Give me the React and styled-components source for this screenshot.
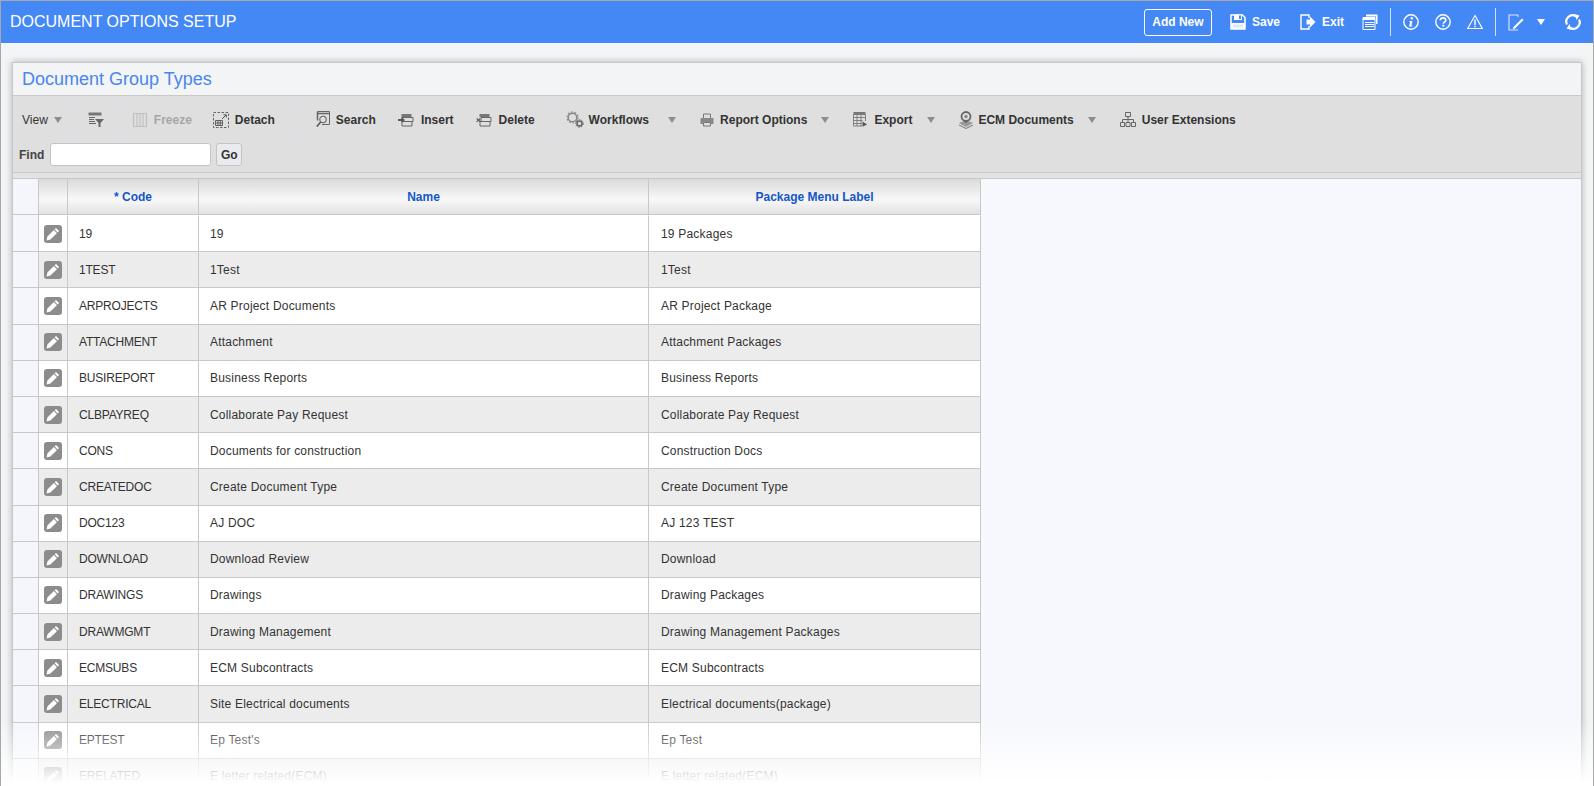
import React from "react";
import styled, { createGlobalStyle } from "styled-components";

const GlobalStyle = createGlobalStyle`
	html, body {
		margin: 0;
		padding: 0;
		background: #ffffff;
		font-family: "Liberation Sans", Arial, sans-serif;
		font-size: 12px;
		color: #333333;
	}
`;

const Page = styled.div`
	position: relative;
	box-sizing: border-box;
	height: 786px;
	overflow: hidden;
	background: #f2f4f6;
	border: 1px solid #a8a8a8;
	border-bottom: none;
`;

const TopBar = styled.header`
	display: flex;
	align-items: center;
	height: 42px;
	padding: 0 12px 0 9px;
	background: #4488f5;
	color: #ffffff;
`;

const AppTitle = styled.h1`
	flex: 1;
	margin: 0;
	font-size: 16px;
	font-weight: 400;
`;

const AddNew = styled.button`
	box-sizing: border-box;
	width: 68px;
	height: 27px;
	margin-right: 18px;
	padding: 0;
	background: transparent;
	border: 1px solid #ffffff;
	border-radius: 3px;
	color: #ffffff;
	font: bold 12px "Liberation Sans", Arial, sans-serif;
`;

const TopAction = styled.div`
	display: flex;
	align-items: center;
	gap: 6px;
	margin-right: ${(p) => p.$mr || 0}px;
	font-weight: 700;
	font-size: 12px;
`;

const TopDivider = styled.div`
	width: 1px;
	height: 28px;
	margin: 0 12px;
	background: rgba(255, 255, 255, 0.75);
`;

const Caret = styled.span`
	display: inline-block;
	width: 0;
	height: 0;
	border-left: 4.5px solid transparent;
	border-right: 4.5px solid transparent;
	border-top: 6px solid ${(p) => p.$color || "#8e8e8e"};
	margin: ${(p) => p.$margin || "0"};
`;

const Content = styled.main`
	padding: 19px 11px 0;
`;

const Panel = styled.section`
	background: #f7f8fd;
	border: 1px solid #c6c6c6;
	box-shadow: 0 0 7px rgba(0, 0, 0, 0.28);
	min-height: 760px;
`;

const PanelTitle = styled.h2`
	box-sizing: border-box;
	height: 33px;
	margin: 0;
	padding: 5px 0 0 9px;
	background: #f2f4f6;
	border-bottom: 1px solid #c8c8c8;
	color: #4a86ee;
	font-size: 18px;
	line-height: 22px;
	font-weight: 400;
`;

const Toolbar = styled.div`
	background: #dfdfdf;
	padding-top: 6px;
	border-bottom: 1px solid #cbcbcb;
`;

const ToolRow = styled.div`
	display: flex;
	align-items: center;
	height: 33px;
	border-top: 1px solid #d8e0ee;
	border-bottom: 1px solid #d8e0ee;
`;

const FindRow = styled.div`
	display: flex;
	align-items: center;
	height: 35px;
	padding-left: 6px;
	font-weight: 700;
	color: #444444;
`;

const FindInput = styled.input`
	box-sizing: border-box;
	width: 161px;
	height: 23px;
	margin-left: 6px;
	background: #ffffff;
	border: 1px solid #c4c4c4;
	border-radius: 3px;
`;

const GoButton = styled.button`
	box-sizing: border-box;
	width: 26px;
	height: 23px;
	margin-left: 5px;
	padding: 0;
	background: #e9ebee;
	border: 1px solid #c4c4c4;
	border-radius: 3px;
	color: #333333;
	font: bold 12px "Liberation Sans", Arial, sans-serif;
`;

const ToolItem = styled.div`
	display: flex;
	align-items: center;
	gap: ${(p) => p.$gap || 6}px;
	margin-left: ${(p) => p.$ml || 0}px;
	font-weight: ${(p) => (p.$plain ? 400 : 700)};
	color: ${(p) => (p.$off ? "#a6a6a6" : "#333333")};
	white-space: nowrap;
`;

const ToolDivider = styled.div`
	align-self: stretch;
	width: 1px;
	margin-left: ${(p) => p.$ml || 0}px;
	background: #d8e0ee;
`;

const Strip = styled.div`
	height: 5px;
	background: #e3e3e3;
	border-bottom: 1px solid #c8c8c8;
`;

const Grid = styled.div`
	width: 968px;
`;

const Row = styled.div`
	display: grid;
	grid-template-columns: 26px 29px 131px 450px 332px;
	height: ${(p) => (p.$head ? "36px" : p.$first ? "37.2px" : "36.2px")};
`;

const Gutter = styled.div`
	box-sizing: border-box;
	background: #f4f6fc;
	border-right: 1px solid #c8c8c8;
	border-bottom: 1px solid #c8c8c8;
`;

const HeadCell = styled.div`
	box-sizing: border-box;
	display: flex;
	align-items: center;
	justify-content: center;
	background: linear-gradient(#dadada, #f8f8f8 58%, #e2e2e2);
	border-right: 1px solid #c8c8c8;
	border-bottom: 1px solid #c8c8c8;
	color: #1356c9;
	font-weight: 700;
`;

const Cell = styled.div`
	box-sizing: border-box;
	display: flex;
	align-items: center;
	padding-left: 12px;
	background: ${(p) => (p.$alt ? "#ececec" : "#ffffff")};
	border-top: ${(p) => (p.$first ? "1px solid #ffffff" : "none")};
	border-right: 1px solid #c8c8c8;
	border-bottom: 1px solid #c8c8c8;
	color: #333333;
	white-space: nowrap;
`;

const EditCell = styled(Cell)`
	padding-left: 5px;
`;

const CodeCell = styled(Cell)`
	padding-left: 11px;
	letter-spacing: -0.2px;
`;

const NameCell = styled(Cell)`
	padding-left: 11px;
	letter-spacing: 0.2px;
`;

const LabelCell = styled(Cell)`
	letter-spacing: 0.2px;
`;

const EditButton = styled.div`
	display: flex;
	align-items: center;
	justify-content: center;
	width: 18px;
	height: 18px;
	background: #8c8c8c;
	border-radius: 3px;
`;

const BottomFade = styled.div`
	position: absolute;
	left: 0;
	right: 0;
	top: 719px;
	height: 66px;
	background: linear-gradient(rgba(255, 255, 255, 0), #ffffff 96%);
	pointer-events: none;
`;

const white = { fill: "none", stroke: "#ffffff", strokeWidth: 1.4 };
const gray = { fill: "none", stroke: "#666666", strokeWidth: 1.1 };

const SaveIcon = () => (
	<svg width="16" height="16" viewBox="0 0 16 16">
		<path d="M1 1h11.500L15 3.500V15H1z" fill="none" stroke="#fff" strokeWidth="1.500" />
		<path d="M4 0.500h8v5.500H4z" fill="#fff" />
		<path d="M9 1.500h2v3.500H9z" fill="#4488f5" />
		<path d="M1 9h14v6H1z" fill="#fff" />
		<path d="M3 10.500h10v3H3z" fill="#dbe8fd" />
	</svg>
);

const ExitIcon = () => (
	<svg width="16" height="16" viewBox="0 0 16 16">
		<path d="M9 4V1H1v14h8v-3" {...white} />
		<path d="M6.500 5.500H10V2.500L15.500 8 10 13.500v-3H6.500z" fill="#fff" />
	</svg>
);

const WindowsIcon = () => (
	<svg width="16" height="16" viewBox="0 0 16 16">
		<path d="M4 0.500h11.500V10H14V2.500H4z" fill="#fff" />
		<path d="M1 3.500h12v12H1z" fill="#4488f5" stroke="#fff" />
		<path d="M1 4h12v2H1zM3 8h9v1H3zM3 10h9v1H3zM3 12h9v1H3z" fill="#fff" />
	</svg>
);

const InfoIcon = () => (
	<svg width="16" height="16" viewBox="0 0 16 16">
		<circle cx="8" cy="8" r="7.200" {...white} />
		<circle cx="8.800" cy="4.300" r="1.200" fill="#fff" />
		<path d="M6.500 7h3l-1.200 4.500h1.200l-.3 1H6l1.200-4.500H6.200z" fill="#fff" />
	</svg>
);

const HelpIcon = () => (
	<svg width="16" height="16" viewBox="0 0 16 16">
		<circle cx="8" cy="8" r="7.200" {...white} />
		<path d="M5.300 6.200C5.400 4.500 6.600 3.800 8 3.800c1.600 0 2.800.9 2.800 2.300 0 2-2.500 2-2.500 3.700" fill="none" stroke="#fff" strokeWidth="1.700" />
		<path d="M7.300 10.800h2v1.800h-2z" fill="#fff" />
	</svg>
);

const WarnIcon = () => (
	<svg width="16" height="16" viewBox="0 0 16 16">
		<path d="M8 1.500L15.300 14.500H.7z" fill="none" stroke="#fff" strokeWidth="1.100" />
		<path d="M7.300 5.500h1.400V11H7.300zM7.300 11.800h1.400v1.400H7.300z" fill="#fff" />
	</svg>
);

const FormIcon = () => (
	<svg width="16" height="17" viewBox="0 0 16 17">
		<path d="M10 3V1H1v15h9" fill="none" stroke="#dce8fd" strokeWidth="1.100" />
		<path d="M5.500 13l8.500-8.500 1.500 1.500-8.500 8.500-2.200.6z" fill="#fff" />
	</svg>
);

const RefreshIcon = () => (
	<svg width="16" height="16" viewBox="0 0 16 16">
		<path d="M2 10.500A6.300 6.300 0 0 1 10.800 2.200" fill="none" stroke="#fff" strokeWidth="2.200" />
		<path d="M14 5.500A6.300 6.300 0 0 1 5.200 13.800" fill="none" stroke="#fff" strokeWidth="2.200" />
		<path d="M9.500 0L14.500 1.500 11.500 6zM6.500 16L1.500 14.500 4.500 10z" fill="#fff" />
	</svg>
);

const FilterIcon = () => (
	<svg width="16" height="16" viewBox="0 0 16 16">
		<path d="M0.500 0.500h13v3h-13z" fill="#777" />
		<path d="M1 5.500h6M1 7.500h5M1 9.500h6M1 11.500h7" {...gray} />
		<path d="M7 7h9l-3.500 4v4h-2v-4z" fill="#666" />
	</svg>
);

const FreezeIcon = () => (
	<svg width="14" height="14" viewBox="0 0 14 14">
		<path d="M.5.500h13v13H.5zM4 1v12M7 1v12M10 1v12" fill="none" stroke="#bdbdbd" />
	</svg>
);

const DetachIcon = () => (
	<svg width="16" height="16" viewBox="0 0 16 16">
		<path d="M.5.500h15v15H.5z" fill="none" stroke="#666" strokeDasharray="2.500 1.500" />
		<path d="M2.500 8.500h7v5h-7zM2.500 11h7M5 8.500v5M7.300 8.500v5" fill="none" stroke="#555" strokeWidth=".9" />
		<path d="M9 7l4-4M10.500 2.800h2.800v2.800" fill="none" stroke="#555" />
	</svg>
);

const SearchIcon = () => (
	<svg width="14" height="17" viewBox="0 0 14 17">
		<path d="M1.500.500h12v13H6" fill="none" stroke="#666" />
		<path d="M1.500.500v9M1.500 2.500h12" fill="none" stroke="#666" strokeWidth="1.500" />
		<circle cx="7" cy="8.500" r="3.200" fill="none" stroke="#666" strokeWidth="1.100" />
		<path d="M4.700 11L.8 15.500" stroke="#555" strokeWidth="1.600" />
	</svg>
);

const InsertIcon = () => (
	<svg width="16" height="14" viewBox="0 0 16 14">
		<path d="M3.500 1h10v3h-10z" fill="#777" />
		<path d="M4 4.500h11v4H4zM4 8.500h10v4.500H4z" fill="none" stroke="#666" />
		<path d="M0 6h3.500V4L7 7 3.500 10V8H0z" fill="#555" />
	</svg>
);

const DeleteIcon = () => (
	<svg width="16" height="14" viewBox="0 0 16 14">
		<path d="M3.500 1h10v3h-10z" fill="#777" />
		<path d="M5 4.500h10v4H5zM4 8.500h10v4.500H4z" fill="none" stroke="#666" />
		<path d="M.7 5.300l3.600 3.600M4.300 5.300L.7 8.900" stroke="#555" strokeWidth="1.200" />
	</svg>
);

const GearsIcon = () => (
	<svg width="18" height="17" viewBox="0 0 18 17">
		<circle cx="6.500" cy="6.500" r="4.300" fill="none" stroke="#888" strokeWidth="1.500" />
		<circle cx="6.500" cy="6.500" r="5.500" fill="none" stroke="#888" strokeWidth="1.200" strokeDasharray="1.800 1.600" />
		<circle cx="13.500" cy="12.500" r="2.500" fill="none" stroke="#666" strokeWidth="1.500" />
		<circle cx="13.500" cy="12.500" r="3.800" fill="none" stroke="#666" strokeWidth="1" strokeDasharray="1.500 1.300" />
	</svg>
);

const PrinterIcon = () => (
	<svg width="14" height="14" viewBox="0 0 14 14">
		<path d="M3.500 5V1h7v4" fill="none" stroke="#777" />
		<path d="M1 5h12a1 1 0 0 1 .5 1v5H11V9H3v2H.5V6A1 1 0 0 1 1 5z" fill="#888" />
		<path d="M3.500 9.500h7v3.500h-7z" fill="none" stroke="#777" />
	</svg>
);

const ExportIcon = () => (
	<svg width="16" height="15" viewBox="0 0 16 15">
		<path d="M.5 0h12v2.500H.5z" fill="#777" />
		<path d="M.5 2.500h12V9M.5 2.500v11.500H9M.5 5.500h12M.5 8.500h9M.5 11.500h8M4 2.500V14M8 2.500V14" fill="none" stroke="#777" strokeWidth=".9" />
		<path d="M9.500 9.500L14 12.500l-4.500 2.200z" fill="#555" />
	</svg>
);

const EcmIcon = () => (
	<svg width="16" height="18" viewBox="0 0 16 18">
		<path d="M1 12l7-3 7 3-7 4z" fill="#999" />
		<path d="M1 14l7 3.500L15 14" fill="none" stroke="#777" />
		<circle cx="8" cy="5.500" r="4.500" fill="none" stroke="#666" strokeWidth="1.800" />
		<circle cx="8" cy="5.500" r="1.700" fill="#888" />
		<path d="M6 9.500h4l-2 3z" fill="#666" />
	</svg>
);

const TreeIcon = () => (
	<svg width="16" height="15" viewBox="0 0 16 15">
		<path d="M5.500.500h5v4h-5zM.5 10.500h4v4h-4zM6 10.500h4v4H6zM11.500 10.500h4v4h-4z" fill="none" stroke="#666" />
		<path d="M8 4.500v6M2.500 10.500V7.500h11v3" fill="none" stroke="#666" />
	</svg>
);

const PencilIcon = () => (
	<svg width="14" height="14" viewBox="0 0 13 13">
		<path d="M9.300.9l2.800 2.800-1.300 1.300L8 2.200zM7.300 2.900l2.800 2.800-6 6L.5 12.500l.8-3.600z" fill="#ffffff" />
	</svg>
);

const rows = [
	["19", "19", "19 Packages"],
	["1TEST", "1Test", "1Test"],
	["ARPROJECTS", "AR Project Documents", "AR Project Package"],
	["ATTACHMENT", "Attachment", "Attachment Packages"],
	["BUSIREPORT", "Business Reports", "Business Reports"],
	["CLBPAYREQ", "Collaborate Pay Request", "Collaborate Pay Request"],
	["CONS", "Documents for construction", "Construction Docs"],
	["CREATEDOC", "Create Document Type", "Create Document Type"],
	["DOC123", "AJ DOC", "AJ 123 TEST"],
	["DOWNLOAD", "Download Review", "Download"],
	["DRAWINGS", "Drawings", "Drawing Packages"],
	["DRAWMGMT", "Drawing Management", "Drawing Management Packages"],
	["ECMSUBS", "ECM Subcontracts", "ECM Subcontracts"],
	["ELECTRICAL", "Site Electrical documents", "Electrical documents(package)"],
	["EPTEST", "Ep Test's", "Ep Test"],
	["ERELATED", "E letter related(ECM)", "E letter related(ECM)"],
];

export default function App() {
	return (
		<Page>
			<GlobalStyle />
			<TopBar>
				<AppTitle>DOCUMENT OPTIONS SETUP</AppTitle>
				<AddNew>Add New</AddNew>
				<TopAction $mr={20}>
					<SaveIcon />
					Save
				</TopAction>
				<TopAction $mr={18}>
					<ExitIcon />
					Exit
				</TopAction>
				<WindowsIcon />
				<TopDivider />
				<TopAction $mr={16}>
					<InfoIcon />
				</TopAction>
				<TopAction $mr={16}>
					<HelpIcon />
				</TopAction>
				<WarnIcon />
				<TopDivider />
				<FormIcon />
				<Caret $color="#ffffff" $margin="0 20px 0 13px" />
				<RefreshIcon />
			</TopBar>
			<Content>
				<Panel>
					<PanelTitle>Document Group Types</PanelTitle>
					<Toolbar>
						<ToolRow>
							<ToolItem $plain $ml={9}>
								View
								<Caret />
							</ToolItem>
							<ToolDivider $ml={13} />
							<ToolItem $ml={12}>
								<FilterIcon />
							</ToolItem>
							<ToolDivider $ml={12} />
							<ToolItem $off $ml={16} $gap={7}>
								<FreezeIcon />
								Freeze
							</ToolItem>
							<ToolItem $ml={21}>
								<DetachIcon />
								Detach
							</ToolItem>
							<ToolDivider $ml={24} />
							<ToolItem $ml={16} $gap={6}>
								<SearchIcon />
								Search
							</ToolItem>
							<ToolItem $ml={22} $gap={7}>
								<InsertIcon />
								Insert
							</ToolItem>
							<ToolItem $ml={22} $gap={7}>
								<DeleteIcon />
								Delete
							</ToolItem>
							<ToolDivider $ml={15} />
							<ToolItem $ml={15} $gap={5}>
								<GearsIcon />
								Workflows
								<Caret $margin="0 0 0 14px" />
							</ToolItem>
							<ToolItem $ml={24} $gap={6}>
								<PrinterIcon />
								Report Options
								<Caret $margin="0 0 0 8px" />
							</ToolItem>
							<ToolItem $ml={24} $gap={5}>
								<ExportIcon />
								Export
								<Caret $margin="0 0 0 10px" />
							</ToolItem>
							<ToolItem $ml={23} $gap={4}>
								<EcmIcon />
								ECM Documents
								<Caret $margin="0 0 0 10px" />
							</ToolItem>
							<ToolItem $ml={24} $gap={6}>
								<TreeIcon />
								User Extensions
							</ToolItem>
						</ToolRow>
						<FindRow>
							Find
							<FindInput />
							<GoButton>Go</GoButton>
						</FindRow>
					</Toolbar>
					<Strip />
					<Grid>
						<Row $head>
							<Gutter />
							<HeadCell />
							<HeadCell>* Code</HeadCell>
							<HeadCell>Name</HeadCell>
							<HeadCell>Package Menu Label</HeadCell>
						</Row>
						{rows.map(([code, name, label], i) => (
							<Row key={code} $first={i === 0}>
								<Gutter />
								<EditCell $alt={i % 2 === 1} $first={i === 0}>
									<EditButton>
										<PencilIcon />
									</EditButton>
								</EditCell>
								<CodeCell $alt={i % 2 === 1} $first={i === 0}>{code}</CodeCell>
								<NameCell $alt={i % 2 === 1} $first={i === 0}>{name}</NameCell>
								<LabelCell $alt={i % 2 === 1} $first={i === 0}>{label}</LabelCell>
							</Row>
						))}
					</Grid>
				</Panel>
			</Content>
			<BottomFade />
		</Page>
	);
}
